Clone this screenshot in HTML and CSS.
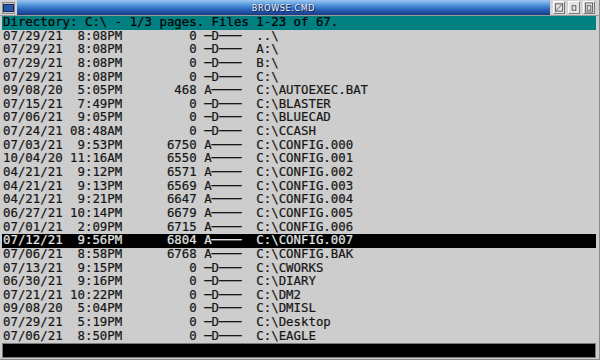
FILE: index.html
```html
<!DOCTYPE html>
<html>
<head>
<meta charset="utf-8">
<link rel="stylesheet" href="styles.css">
</head>
<body>
<div class="window">
  <div class="titlebar">
    <div class="sysicon"><div class="sysicon-inner"></div></div>
    <div class="caption"><span>BROWSE.CMD</span></div>
    <div class="buttons">
      <div class="btn"><svg width="11" height="11" viewBox="0 0 11 11"><rect x="1.5" y="1.5" width="8" height="8" fill="none" stroke="#555" stroke-width="1"/><line x1="2" y1="9" x2="9" y2="2" stroke="#555" stroke-width="1"/></svg></div>
      <div class="btn"><svg width="11" height="11" viewBox="0 0 11 11"><rect x="3.5" y="3.5" width="4" height="5" fill="none" stroke="#555" stroke-width="1"/></svg></div>
      <div class="btn"><svg width="11" height="11" viewBox="0 0 11 11"><rect x="1.5" y="0.5" width="8" height="10" fill="none" stroke="#555" stroke-width="1"/><rect x="3.5" y="3.5" width="4" height="5" fill="none" stroke="#555" stroke-width="1"/></svg></div>
    </div>
  </div>
  <div class="screen">
    <div class="line header">Directory: C:\ - 1/3 pages. Files 1-23 of 67.</div>
    <div class="line">07/29/21  8:08PM         0 ─D───  ..\</div>
    <div class="line">07/29/21  8:08PM         0 ─D───  A:\</div>
    <div class="line">07/29/21  8:08PM         0 ─D───  B:\</div>
    <div class="line">07/29/21  8:08PM         0 ─D───  C:\</div>
    <div class="line">09/08/20  5:05PM       468 A────  C:\AUTOEXEC.BAT</div>
    <div class="line">07/15/21  7:49PM         0 ─D───  C:\BLASTER</div>
    <div class="line">07/06/21  9:05PM         0 ─D───  C:\BLUECAD</div>
    <div class="line">07/24/21 08:48AM         0 ─D───  C:\CCASH</div>
    <div class="line">07/03/21  9:53PM      6750 A────  C:\CONFIG.000</div>
    <div class="line">10/04/20 11:16AM      6550 A────  C:\CONFIG.001</div>
    <div class="line">04/21/21  9:12PM      6571 A────  C:\CONFIG.002</div>
    <div class="line">04/21/21  9:13PM      6569 A────  C:\CONFIG.003</div>
    <div class="line">04/21/21  9:21PM      6647 A────  C:\CONFIG.004</div>
    <div class="line">06/27/21 10:14PM      6679 A────  C:\CONFIG.005</div>
    <div class="line">07/01/21  2:09PM      6715 A────  C:\CONFIG.006</div>
    <div class="line selected">07/12/21  9:56PM      6804 A────  C:\CONFIG.007</div>
    <div class="line">07/06/21  8:58PM      6768 A────  C:\CONFIG.BAK</div>
    <div class="line">07/13/21  9:15PM         0 ─D───  C:\CWORKS</div>
    <div class="line">06/30/21  9:16PM         0 ─D───  C:\DIARY</div>
    <div class="line">07/21/21 10:22PM         0 ─D───  C:\DM2</div>
    <div class="line">09/08/20  5:04PM         0 ─D───  C:\DMISL</div>
    <div class="line">07/29/21  5:19PM         0 ─D───  C:\Desktop</div>
    <div class="line">07/06/21  8:50PM         0 ─D───  C:\EAGLE</div>
    <div class="statusbar"></div>
  </div>
</div>
</body>
</html>
```
FILE: styles.css
```css
html, body {
  margin: 0;
  padding: 0;
  background: #cdcdcd;
}
.window {
  width: 600px;
  height: 360px;
  box-sizing: border-box;
  display: flex;
  flex-direction: column;
  background: #cdcdcd;
  border-right: 1px solid #8a8a8a;
  border-bottom: 1px solid #8a8a8a;
  overflow: hidden;
}
.titlebar {
  height: 16px;
  display: flex;
  align-items: center;
  padding: 0 2px 0 2px;
  background: #d4d4d4;
  border-bottom: 1px solid #9a9a9a;
  box-sizing: border-box;
}
.sysicon {
  width: 13px;
  height: 12px;
  background: #c8c8c8;
  border: 1px solid #888;
  box-sizing: border-box;
  display: flex;
  align-items: center;
  justify-content: center;
  margin-right: 2px;
}
.sysicon-inner {
  width: 9px;
  height: 6px;
  background: #2a56a6;
  border: 1px solid #1a2a55;
}
.caption {
  flex: 1;
  height: 15px;
  display: flex;
  align-items: center;
  justify-content: center;
  background: linear-gradient(to bottom, #9cc8f0 0%, #4f92da 35%, #2a62b8 65%, #173a86 100%);
  margin-right: 3px;
}
.caption span {
  font-family: "DejaVu Sans Condensed", "DejaVu Sans", sans-serif;
  font-size: 9px;
  color: #ffffff;
  letter-spacing: 0.6px;
  text-shadow: 0 0 1px #102050, 1px 1px 0 #102050;
}
.buttons {
  display: flex;
  gap: 3px;
  padding-right: 2px;
}
.btn {
  width: 12px;
  height: 13px;
  box-sizing: border-box;
  background: #e4e4e4;
  border: 1px solid;
  border-color: #ffffff #7a7a7a #7a7a7a #ffffff;
  display: flex;
  align-items: center;
  justify-content: center;
}
.screen {
  flex: 1;
  padding: 0 3px 0 2px;
  display: flex;
  flex-direction: column;
}
.line {
  height: 13.65px;
  line-height: 13.65px;
  padding-left: 1px;
  font-family: "DejaVu Sans Mono", monospace;
  font-size: 12.38px;
  white-space: pre;
  color: #161616;
  -webkit-text-stroke: 0.2px currentColor;
}
.header {
  background: #008080;
  color: #000000;
}
.selected {
  background: #000000;
  color: #e6e6e6;
}
.statusbar {
  height: 13px;
  background: #000000;
  border: 1px solid #7a7a7a;
}
```
